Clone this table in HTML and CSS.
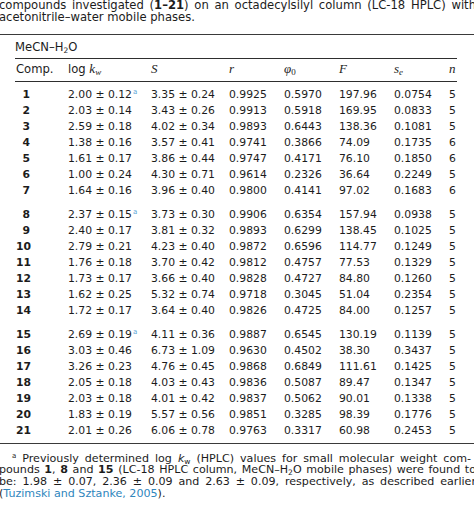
FILE: index.html
```html
<!DOCTYPE html>
<html>
<head>
<meta charset="utf-8">
<link rel="stylesheet" href="styles.css">
</head>
<body>
<div class="page">
  <div class="caption">
    <div class="jline">compounds investigated (<b>1–21</b>) on an octadecylsilyl column (LC-18 HPLC) with</div>
    <div class="line">acetonitrile–water mobile phases.</div>
  </div>
  <div class="rule-thick top"></div>
  <div class="table">
    <div class="group-label">MeCN–H<sub class="sb">2</sub>O</div>
    <div class="rule-thin r2"></div>
    <div class="row head">
      <span class="c">Comp.</span>
      <span>log <i class="v">k<sub class="vs">w</sub></i></span>
      <span><i class="v">S</i></span>
      <span><i class="v">r</i></span>
      <span><i class="v">φ</i><sub class="vs0">0</sub></span>
      <span><i class="v">F</i></span>
      <span><i class="v">s<sub class="vs">e</sub></i></span>
      <span><i class="v">n</i></span>
    </div>
    <div class="rule-thin r3"></div>
    <div class="body">
      <div class="row"><span class="c"><b class="num">1</b></span><span>2.00 ± 0.12<sup class="fn">a</sup></span><span>3.35 ± 0.24</span><span>0.9925</span><span>0.5970</span><span>197.96</span><span>0.0754</span><span>5</span></div>
      <div class="row"><span class="c"><b class="num">2</b></span><span>2.03 ± 0.14</span><span>3.43 ± 0.26</span><span>0.9913</span><span>0.5918</span><span>169.95</span><span>0.0833</span><span>5</span></div>
      <div class="row"><span class="c"><b class="num">3</b></span><span>2.59 ± 0.18</span><span>4.02 ± 0.34</span><span>0.9893</span><span>0.6443</span><span>138.36</span><span>0.1081</span><span>5</span></div>
      <div class="row"><span class="c"><b class="num">4</b></span><span>1.38 ± 0.16</span><span>3.57 ± 0.41</span><span>0.9741</span><span>0.3866</span><span>74.09</span><span>0.1735</span><span>6</span></div>
      <div class="row"><span class="c"><b class="num">5</b></span><span>1.61 ± 0.17</span><span>3.86 ± 0.44</span><span>0.9747</span><span>0.4171</span><span>76.10</span><span>0.1850</span><span>6</span></div>
      <div class="row"><span class="c"><b class="num">6</b></span><span>1.00 ± 0.24</span><span>4.30 ± 0.71</span><span>0.9614</span><span>0.2326</span><span>36.64</span><span>0.2249</span><span>5</span></div>
      <div class="row"><span class="c"><b class="num">7</b></span><span>1.64 ± 0.16</span><span>3.96 ± 0.40</span><span>0.9800</span><span>0.4141</span><span>97.02</span><span>0.1683</span><span>6</span></div>
      <div class="row gap"><span class="c"><b class="num">8</b></span><span>2.37 ± 0.15<sup class="fn">a</sup></span><span>3.73 ± 0.30</span><span>0.9906</span><span>0.6354</span><span>157.94</span><span>0.0938</span><span>5</span></div>
      <div class="row"><span class="c"><b class="num">9</b></span><span>2.40 ± 0.17</span><span>3.81 ± 0.32</span><span>0.9893</span><span>0.6299</span><span>138.45</span><span>0.1025</span><span>5</span></div>
      <div class="row"><span class="c"><b class="num">10</b></span><span>2.79 ± 0.21</span><span>4.23 ± 0.40</span><span>0.9872</span><span>0.6596</span><span>114.77</span><span>0.1249</span><span>5</span></div>
      <div class="row"><span class="c"><b class="num">11</b></span><span>1.76 ± 0.18</span><span>3.70 ± 0.42</span><span>0.9812</span><span>0.4757</span><span>77.53</span><span>0.1329</span><span>5</span></div>
      <div class="row"><span class="c"><b class="num">12</b></span><span>1.73 ± 0.17</span><span>3.66 ± 0.40</span><span>0.9828</span><span>0.4727</span><span>84.80</span><span>0.1260</span><span>5</span></div>
      <div class="row"><span class="c"><b class="num">13</b></span><span>1.62 ± 0.25</span><span>5.32 ± 0.74</span><span>0.9718</span><span>0.3045</span><span>51.04</span><span>0.2354</span><span>5</span></div>
      <div class="row"><span class="c"><b class="num">14</b></span><span>1.72 ± 0.17</span><span>3.64 ± 0.40</span><span>0.9826</span><span>0.4725</span><span>84.00</span><span>0.1257</span><span>5</span></div>
      <div class="row gap"><span class="c"><b class="num">15</b></span><span>2.69 ± 0.19<sup class="fn">a</sup></span><span>4.11 ± 0.36</span><span>0.9887</span><span>0.6545</span><span>130.19</span><span>0.1139</span><span>5</span></div>
      <div class="row"><span class="c"><b class="num">16</b></span><span>3.03 ± 0.46</span><span>6.73 ± 1.09</span><span>0.9630</span><span>0.4502</span><span>38.30</span><span>0.3437</span><span>5</span></div>
      <div class="row"><span class="c"><b class="num">17</b></span><span>3.26 ± 0.23</span><span>4.76 ± 0.45</span><span>0.9868</span><span>0.6849</span><span>111.61</span><span>0.1425</span><span>5</span></div>
      <div class="row"><span class="c"><b class="num">18</b></span><span>2.05 ± 0.18</span><span>4.03 ± 0.43</span><span>0.9836</span><span>0.5087</span><span>89.47</span><span>0.1347</span><span>5</span></div>
      <div class="row"><span class="c"><b class="num">19</b></span><span>2.03 ± 0.18</span><span>4.01 ± 0.42</span><span>0.9837</span><span>0.5062</span><span>90.01</span><span>0.1338</span><span>5</span></div>
      <div class="row"><span class="c"><b class="num">20</b></span><span>1.83 ± 0.19</span><span>5.57 ± 0.56</span><span>0.9851</span><span>0.3285</span><span>98.39</span><span>0.1776</span><span>5</span></div>
      <div class="row"><span class="c"><b class="num">21</b></span><span>2.01 ± 0.26</span><span>6.06 ± 0.78</span><span>0.9763</span><span>0.3317</span><span>60.98</span><span>0.2453</span><span>5</span></div>
    </div>
  </div>
  <div class="rule-thick bottom"></div>
  <div class="footnote">
    <div class="jline first"><sup class="fnm">a</sup> Previously determined log <i>k</i><sub class="sb">w</sub> (HPLC) values for small molecular weight com-</div>
    <div class="jline">pounds <b>1</b>, <b>8</b> and <b>15</b> (LC-18 HPLC column, MeCN–H<sub class="sb">2</sub>O mobile phases) were found to</div>
    <div class="jline">be: 1.98 ± 0.07, 2.36 ± 0.09 and 2.63 ± 0.09, respectively, as described earlier</div>
    <div class="line">(<span class="link">Tuzimski and Sztanke, 2005</span>).</div>
  </div>
</div>
</body>
</html>
```
FILE: styles.css
```css
html, body {
  margin: 0;
  padding: 0;
  overflow: hidden;
  background: #ffffff;
}
.page {
  margin-left: -1px;
  width: 477px;
  font-family: "DejaVu Sans", "Open Sans", sans-serif;
  color: #1c1c1c;
}
.caption {
  font-size: 11.6px;
  line-height: 12px;
  margin-top: -0.6px;
}
.jline {
  text-align: justify;
  text-align-last: justify;
}
.line {
  text-align: left;
}
.rule-thick {
  height: 0;
  border-top: 1.5px solid #3a3a3a;
}
.rule-thick.top {
  margin-top: 10.3px;
}
.rule-thin {
  height: 0;
  border-top: 1px solid #2e2e2e;
}
.table {
  margin-left: 16px;
  width: 442px;
  font-size: 10.8px;
}
.group-label {
  font-size: 11.6px;
  line-height: 16px;
  padding-top: 4.7px;
}
.rule-thin.r2 {
  margin-top: 2.4px;
}
.row {
  display: grid;
  grid-template-columns: 53px 83px 78px 55px 55px 55px 55px 8px;
  height: 16px;
  line-height: 16px;
  white-space: nowrap;
}
.row.head {
  font-size: 11.6px;
  margin-top: 2.3px;
}
.rule-thin.r3 {
  margin-top: 3.7px;
  border-top-width: 1.2px;
}
.body {
  padding-top: 5px;
}
.row.gap {
  margin-top: 8px;
}
.row .c {
  padding-left: 1px;
}
.num {
  display: inline-block;
  width: 14px;
  text-align: right;
  font-weight: 700;
}
.v {
  font-family: "Liberation Serif", "DejaVu Serif", serif;
  font-style: italic;
  font-size: 13px;
}
.vs {
  font-size: 9px;
  vertical-align: -2px;
  line-height: 0;
}
.vs0 {
  font-family: "Liberation Serif", serif;
  font-size: 9px;
  vertical-align: -2px;
  line-height: 0;
}
.sb {
  font-size: 7.5px;
  vertical-align: -2px;
  line-height: 0;
}
.fn {
  font-size: 7px;
  vertical-align: 4px;
  line-height: 0;
  color: #5aa6d8;
  margin-left: 1px;
}
.bottom {
  margin-top: 4px;
}
.footnote {
  font-size: 11.1px;
  line-height: 11.6px;
  padding-top: 9px;
}
.footnote .first {
  padding-left: 13px;
  padding-right: 5px;
}
.fnm {
  font-size: 7px;
  vertical-align: 4px;
  line-height: 0;
}
.link {
  color: #2f86bd;
}
```
